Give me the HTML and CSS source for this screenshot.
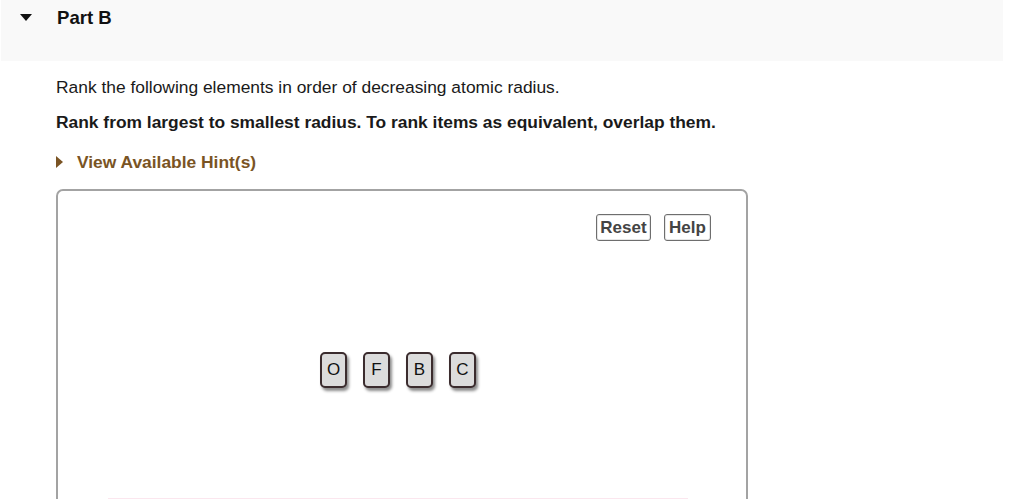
FILE: index.html
```html
<!DOCTYPE html>
<html>
<head>
<meta charset="utf-8">
<link rel="stylesheet" href="styles.css">
</head>
<body>
<div class="header">
  <span class="caret-down"></span>
  <span class="part-title">Part B</span>
</div>
<div class="content">
  <p class="prompt">Rank the following elements in order of decreasing atomic radius.</p>
  <p class="instruction">Rank from largest to smallest radius. To rank items as equivalent, overlap them.</p>
  <div class="hint"><span class="caret-right"></span><span>View Available Hint(s)</span></div>
  <div class="rank-box">
    <div class="toolbar">
      <button class="btn btn-reset">Reset</button>
      <button class="btn btn-help">Help</button>
    </div>
    <div class="tiles">
      <div class="tile">O</div>
      <div class="tile">F</div>
      <div class="tile">B</div>
      <div class="tile">C</div>
    </div>
    <div class="dropzone"></div>
  </div>
</div>
</body>
</html>
```
FILE: styles.css
```css
html, body {
  margin: 0;
  padding: 0;
  background: #ffffff;
  font-family: "Liberation Sans", Arial, sans-serif;
  color: #1a1a1a;
}
.header {
  width: 1002px;
  height: 61px;
  margin-left: 1px;
  background: #f9f9f9;
  display: flex;
  align-items: flex-start;
  padding-top: 7px;
  box-sizing: border-box;
}
.caret-down {
  width: 0;
  height: 0;
  border-left: 6.5px solid transparent;
  border-right: 6.5px solid transparent;
  border-top: 7px solid #111;
  margin-left: 19px;
  margin-top: 7px;
}
.part-title {
  font-weight: bold;
  font-size: 18.6px;
  margin-left: 25px;
  line-height: 22px;
  color: #111;
}
.content {
  padding-left: 56px;
}
.prompt {
  margin: 16px 0 0 0;
  font-size: 17.4px;
  line-height: 20px;
}
.instruction {
  margin: 15px 0 0 0;
  font-size: 17.4px;
  line-height: 20px;
  font-weight: bold;
}
.hint {
  margin-top: 20px;
  display: flex;
  align-items: center;
  font-weight: bold;
  font-size: 17.4px;
  line-height: 20px;
  color: #7a5424;
}
.caret-right {
  width: 0;
  height: 0;
  border-top: 6px solid transparent;
  border-bottom: 6px solid transparent;
  border-left: 7px solid #7a5424;
  margin-right: 14px;
}
.rank-box {
  margin-top: 17px;
  width: 692px;
  height: 400px;
  box-sizing: border-box;
  border: 2px solid #a3a3a3;
  border-radius: 7px;
}
.toolbar {
  display: flex;
  justify-content: flex-end;
  gap: 13px;
  padding: 23px 35px 0 0;
}
.btn {
  font-family: "Liberation Sans", Arial, sans-serif;
  font-weight: bold;
  font-size: 17px;
  color: #444;
  background: #fff;
  border: 1px solid #6e6e6e;
  border-radius: 3px;
  height: 27px;
  padding: 0;
  line-height: 25px;
  box-shadow: inset 0 0 0 1px #e6e6e6;
}
.btn-reset { width: 55px; }
.btn-help { width: 47px; }
.tiles {
  display: flex;
  gap: 16px;
  margin-top: 111px;
  padding-left: 262px;
}
.tile {
  width: 27px;
  height: 36px;
  box-sizing: border-box;
  background: #dcdcdc;
  border: 2px solid #3b2c2e;
  border-radius: 5px;
  display: flex;
  align-items: center;
  justify-content: center;
  font-size: 17px;
  color: #111;
  box-shadow: 2px 3px 3px rgba(0, 0, 0, 0.45);
}
.dropzone {
  margin: 110px 58px 0 50px;
  border-top: 2px solid #fbe6ee;
  height: 40px;
}
```
